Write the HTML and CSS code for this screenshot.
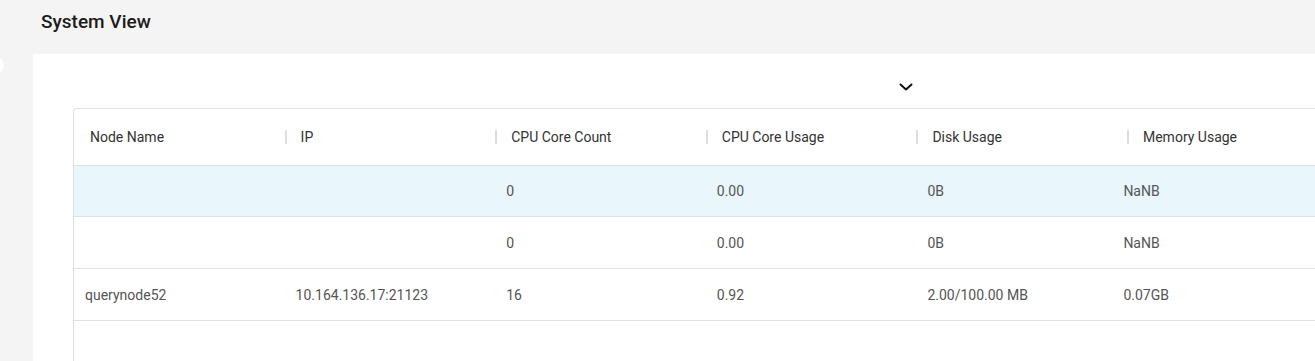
FILE: index.html
```html
<!DOCTYPE html>
<html lang="en">
<head>
    <meta charset="UTF-8">
    <title>System View</title>
    <link rel="stylesheet" href="styles.css">
</head>
<body>
    <span class="side-toggle"></span>
    <header class="page-header">
        <h1 class="page-title">System View</h1>
    </header>

    <main class="card">
        <div class="toolbar">
            <button class="collapse-btn" aria-label="Expand">
                <svg width="16" height="16" viewBox="0 0 16 16">
                    <path d="M2.5 5.5l5.5 5 5.5-5" fill="none" stroke="#111" stroke-width="2" stroke-linecap="round" stroke-linejoin="round"/>
                </svg>
            </button>
        </div>

        <div class="node-table">
            <div class="head-row">
                <div class="head-cell">Node Name</div>
                <div class="head-cell">IP</div>
                <div class="head-cell">CPU Core Count</div>
                <div class="head-cell">CPU Core Usage</div>
                <div class="head-cell">Disk Usage</div>
                <div class="head-cell">Memory Usage</div>
            </div>
            <div class="row selected">
                <div class="cell"></div>
                <div class="cell"></div>
                <div class="cell">0</div>
                <div class="cell">0.00</div>
                <div class="cell">0B</div>
                <div class="cell">NaNB</div>
            </div>
            <div class="row">
                <div class="cell"></div>
                <div class="cell"></div>
                <div class="cell">0</div>
                <div class="cell">0.00</div>
                <div class="cell">0B</div>
                <div class="cell">NaNB</div>
            </div>
            <div class="row">
                <div class="cell">querynode52</div>
                <div class="cell">10.164.136.17:21123</div>
                <div class="cell">16</div>
                <div class="cell">0.92</div>
                <div class="cell">2.00/100.00 MB</div>
                <div class="cell">0.07GB</div>
            </div>
        </div>
    </main>
</body>
</html>
```

FILE: styles.css
```css
:root {
    --page: #f4f4f4;
    --line: #e0e0e0;
    --head-text: #333333;
    --body-text: #555555;
    --selected: #e9f6fc;
}

* {
    margin: 0;
    padding: 0;
    box-sizing: border-box;
}

body {
    background: var(--page);
    font-family: Roboto, "Noto Sans", Arial, sans-serif;
    height: 361px;
    overflow: hidden;
    position: relative;
}

.side-toggle {
    position: absolute;
    left: -13px;
    top: 57px;
    width: 17px;
    height: 17px;
    border-radius: 50%;
    background: #ffffff;
}

.page-header {
    height: 54px;
    padding: 10px 0 0 41px;
}

.page-title {
    font-size: 19px;
    font-weight: 500;
    line-height: 24px;
    color: #1b1b1b;
}

.card {
    background: #ffffff;
    margin-left: 33px;
    padding-left: 40px;
    height: 320px;
    overflow: hidden;
}

.toolbar {
    height: 54px;
    padding: 25px 0 0 825px;
}

.collapse-btn {
    border: none;
    background: none;
    width: 16px;
    height: 16px;
    display: block;
    cursor: pointer;
}

.collapse-btn svg {
    display: block;
}

.node-table {
    width: 1300px;
    border-top: 1px solid var(--line);
    border-left: 1px solid var(--line);
    border-top-left-radius: 4px;
    height: 260px;
}

.head-row {
    display: grid;
    grid-template-columns: repeat(5, 210.6px) 1fr;
    height: 57px;
    align-items: center;
    border-bottom: 1px solid var(--line);
}

.head-cell {
    position: relative;
    padding-left: 16px;
    font-size: 14px;
    line-height: 20px;
    color: var(--head-text);
}

.head-cell + .head-cell::before {
    content: "";
    position: absolute;
    left: 0;
    top: 3px;
    width: 2px;
    height: 14px;
    background: #dddddd;
}

.row {
    display: grid;
    grid-template-columns: repeat(4, 210.6px) 196px 1fr;
    height: 52px;
    align-items: center;
    border-bottom: 1px solid var(--line);
}

.row.selected {
    background: var(--selected);
    height: 51px;
}

.cell {
    padding-left: 11px;
    font-size: 14px;
    line-height: 20px;
    color: var(--body-text);
}
```
